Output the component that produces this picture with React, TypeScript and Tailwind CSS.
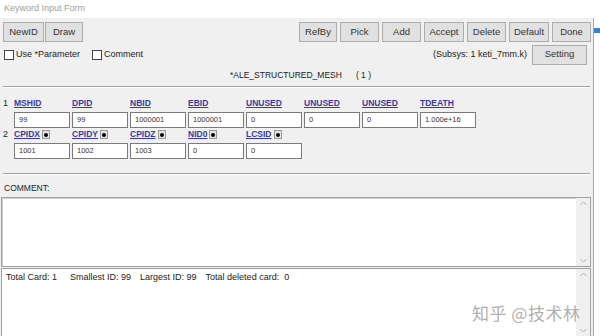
import React from "react";

const ui = { fontFamily: '"Liberation Sans", Arial, sans-serif' };

function Btn({ label, w }: { label: string; w: string }) {
  return (
    <div
      className={`${w} h-[20px] flex items-center justify-center bg-[#e1e1e1] border border-[#adadad] text-[9.5px] text-[#333]`}
      style={ui}
    >
      {label}
    </div>
  );
}

function Check({ label }: { label: string }) {
  return (
    <div className="flex items-center gap-[2px] text-[9px] text-[#222]" style={ui}>
      <div className="w-[10px] h-[10px] bg-white border border-[#444]" />
      <span>{label}</span>
    </div>
  );
}

type F = { label: string; value: string; dot?: boolean };

function Field({ f }: { f: F }) {
  return (
    <div className="w-[58px] flex flex-col">
      <div className="h-[13px] flex items-center gap-[2px]">
        <span
          className="text-[8.5px] font-bold text-[#3a3aa6] underline leading-none"
          style={ui}
        >
          {f.label}
        </span>
        {f.dot && (
          <div className="w-[8px] h-[9px] bg-[#e4e4e4] border border-[#999] flex items-center justify-center">
            <div className="w-[4px] h-[4px] rounded-full bg-black" />
          </div>
        )}
      </div>
      <div
        className="mt-[2px] w-[56px] h-[16px] bg-white border border-[#7a7a7a] flex items-center pl-[4px] text-[7.5px] text-[#333]"
        style={ui}
      >
        {f.value}
      </div>
    </div>
  );
}

function Row({ n, fields }: { n: string; fields: F[] }) {
  return (
    <div className="flex">
      <div className="w-[14px] pl-[3px] text-[9px] text-[#222] leading-[13px]" style={ui}>
        {n}
      </div>
      {fields.map((f, i) => (
        <Field key={i} f={f} />
      ))}
    </div>
  );
}

function Scrollbar() {
  return (
    <div className="w-[14px] bg-[#f0f0f0] flex flex-col justify-between items-center py-[3px]">
      <svg width="7" height="5" viewBox="0 0 7 5">
        <path d="M0.5 4 L3.5 1 L6.5 4" fill="none" stroke="#b0b0b0" strokeWidth="1" />
      </svg>
      <svg width="7" height="5" viewBox="0 0 7 5">
        <path d="M0.5 1 L3.5 4 L6.5 1" fill="none" stroke="#b0b0b0" strokeWidth="1" />
      </svg>
    </div>
  );
}

export default function App() {
  const row1: F[] = [
    { label: "MSHID", value: "99" },
    { label: "DPID", value: "99" },
    { label: "NBID", value: "1000001" },
    { label: "EBID", value: "1000001" },
    { label: "UNUSED", value: "0" },
    { label: "UNUSED", value: "0" },
    { label: "UNUSED", value: "0" },
    { label: "TDEATH", value: "1.000e+16" },
  ];
  const row2: F[] = [
    { label: "CPIDX", value: "1001", dot: true },
    { label: "CPIDY", value: "1002", dot: true },
    { label: "CPIDZ", value: "1003", dot: true },
    { label: "NID0", value: "0", dot: true },
    { label: "LCSID", value: "0", dot: true },
  ];
  return (
    <div className="w-[600px] h-[336px] bg-white overflow-hidden flex flex-col relative">
      <div className="h-[18px] pl-[4px] flex items-center text-[9px] text-[#a0a0a0]" style={ui}>
        Keyword Input Form
      </div>
      <div className="flex flex-1 min-h-0">
        <div className="w-[594px] bg-[#f0f0f0] border-r border-[#a8a8a8] flex flex-col">
          {/* buttons */}
          <div className="mt-[4px] flex justify-between pl-[3px] pr-[2px]">
            <div className="flex gap-[1px]">
              <Btn label="NewID" w="w-[41px]" />
              <Btn label="Draw" w="w-[38px]" />
            </div>
            <div className="flex gap-[3px]">
              <Btn label="RefBy" w="w-[38px]" />
              <Btn label="Pick" w="w-[39px]" />
              <Btn label="Add" w="w-[39px]" />
              <Btn label="Accept" w="w-[40px]" />
              <Btn label="Delete" w="w-[39px]" />
              <Btn label="Default" w="w-[40px]" />
              <Btn label="Done" w="w-[39px]" />
            </div>
          </div>
          {/* checkbox row */}
          <div className="mt-[3px] h-[19px] flex items-center pl-[4px] pr-[6px]">
            <div className="flex gap-[12px] items-center">
              <Check label="Use *Parameter" />
              <Check label="Comment" />
            </div>
            <div className="flex-1" />
            <span className="text-[9px] text-[#222] mr-[5px]" style={ui}>
              (Subsys: 1 keti_7mm.k)
            </span>
            <Btn label="Setting" w="w-[55px]" />
          </div>
          {/* title */}
          <div className="mt-[4px] h-[14px] flex justify-center items-center text-[8.5px] text-[#222]" style={ui}>
            <span className="ml-[8px]">*ALE_STRUCTURED_MESH</span>
            <span className="ml-[14px]">( 1 )</span>
          </div>
          <div className="mt-[4px] mx-[3px] h-[2px] border-t border-[#a0a0a0] border-b border-b-white" />
          <div className="mt-[9px] flex flex-col">
            <Row n="1" fields={row1} />
            <Row n="2" fields={row2} />
          </div>
          <div className="mt-[14px] mx-[3px] h-[2px] border-t border-[#a0a0a0] border-b border-b-white" />
          <div className="mt-[7px] pl-[4px] h-[12px] text-[8.5px] text-[#222] leading-[12px]" style={ui}>
            COMMENT:
          </div>
          <div className="mt-[3px] h-[70px] ml-[1px] mr-[2px] flex bg-white border border-[#a0a0a0] shadow-[inset_1px_1px_0_#d0d0d0]">
            <div className="flex-1" />
            <Scrollbar />
          </div>
          <div className="mt-[1px] flex-1 ml-[1px] mr-[2px] flex bg-white border border-[#a0a0a0] border-b-0">
            <div className="flex-1 pl-[4px] pt-[2px] text-[9px] text-[#222] whitespace-pre flex" style={ui}>
              <span>Total Card: 1</span>
              <span className="ml-[13px]">Smallest ID: 99</span>
              <span className="ml-[9px]">Largest ID: 99</span>
              <span className="ml-[9px]">{"Total deleted card:  0"}</span>
            </div>
            <Scrollbar />
          </div>
        </div>
        <div className="flex-1 flex flex-col">
          <div className="mt-[10px] h-[5px] bg-[#3f7fd0]" />
        </div>
      </div>
      <div
        className="absolute left-[472px] top-[300px] text-[17px] text-[#b0b0b0] tracking-[0.5px]"
        style={{
          fontFamily: '"Noto Sans CJK SC", "Noto Sans", sans-serif',
          textShadow: "0 0 2px #fff, 0 0 2px #fff",
        }}
      >
        知乎 @技术林
      </div>
    </div>
  );
}
